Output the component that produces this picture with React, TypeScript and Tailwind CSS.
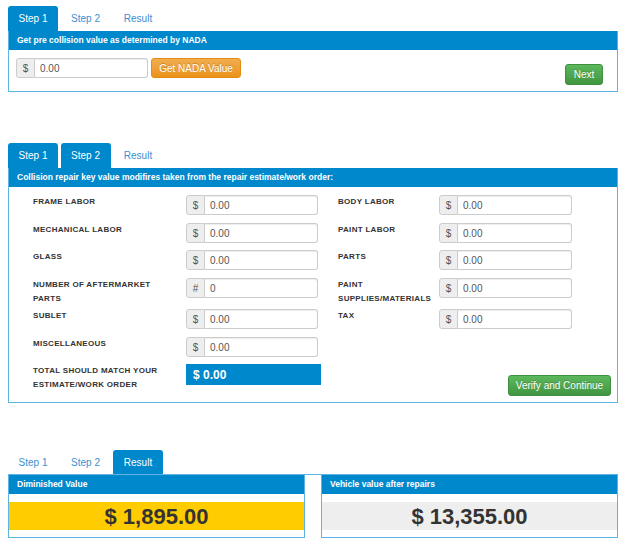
import React from "react";

type TabState = "done" | "active" | "idle";

const font = { fontFamily: '"Liberation Sans", Arial, sans-serif' };

function Tabs({ states, line = false }: { states: TabState[]; line?: boolean }) {
  const names = ["Step 1", "Step 2", "Result"];
  return (
    <div className={`flex h-[25px] gap-[2.5px] ${line ? "border-b border-[#5db4e6]" : ""}`}>
      {names.map((name, i) => (
        <div
          key={name}
          className={`flex w-[50px] items-center justify-center rounded-t-[3px] text-[10px] ${
            states[i] === "idle" ? "text-[#3b8fd1]" : "bg-[#0088cc] text-white"
          }`}
        >
          {name}
        </div>
      ))}
    </div>
  );
}

function Header({ children }: { children: React.ReactNode }) {
  return (
    <div className="flex h-[19px] items-center bg-[#0088cc] pl-[8px] text-[8.5px] font-bold text-white">
      {children}
    </div>
  );
}

function Field({ addon, value, width }: { addon: string; value: string; width: string }) {
  return (
    <div className={`flex h-[20px] ${width}`}>
      <div className="flex w-[19px] shrink-0 items-center justify-center rounded-l-[3px] border border-[#cccccc] bg-[#eeeeee] text-[10px] text-[#555]">
        {addon}
      </div>
      <div className="flex flex-1 items-center rounded-r-[3px] border border-l-0 border-[#cccccc] bg-white pl-[5px] text-[10px] text-[#555] shadow-[inset_0_1px_1px_rgba(0,0,0,0.075)]">
        {value}
      </div>
    </div>
  );
}

const rows = [
  { h: "h-[28px]", a: ["FRAME LABOR", "$", "0.00"], b: ["BODY LABOR", "$", "0.00"] },
  { h: "h-[27px]", a: ["MECHANICAL LABOR", "$", "0.00"], b: ["PAINT LABOR", "$", "0.00"] },
  { h: "h-[28px]", a: ["GLASS", "$", "0.00"], b: ["PARTS", "$", "0.00"] },
  { h: "h-[31px]", a: ["NUMBER OF AFTERMARKET PARTS", "#", "0"], b: ["PAINT SUPPLIES/MATERIALS", "$", "0.00"] },
  { h: "h-[28px]", a: ["SUBLET", "$", "0.00"], b: ["TAX", "$", "0.00"] },
  { h: "h-[27px]", a: ["MISCELLANEOUS", "$", "0.00"], b: null },
];

const label = "text-[8px] font-bold leading-[14px] tracking-[0.3px] text-[#333]";

function ResultBox({ title, value, band }: { title: string; value: string; band: string }) {
  return (
    <div className="w-[297px] border border-t-0 border-[#5db4e6]">
      <Header>{title}</Header>
      <div className="pt-[8px] pb-[7px]">
        <div className={`flex h-[28px] items-center justify-center text-[22px] font-bold text-[#333] ${band}`}>
          {value}
        </div>
      </div>
    </div>
  );
}

export default function App() {
  return (
    <div className="min-h-screen bg-white pt-[6px]" style={font}>
      <div className="ml-[8px] w-[610px]">
        {/* Step 1 */}
        <Tabs states={["active", "idle", "idle"]} />
        <div className="border border-t-0 border-[#5db4e6]">
          <Header>Get pre collision value as determined by NADA</Header>
          <div className="flex justify-between pt-[8px] pb-[6px] pl-[7px] pr-[14px]">
            <div className="flex gap-[3px]">
              <Field addon="$" value="0.00" width="w-[132px]" />
              <button className="h-[20px] w-[90px] rounded-[3px] border border-[#e38d13] bg-gradient-to-b from-[#f0ad4e] to-[#eb9316] text-[10px] text-white [text-shadow:0_-1px_0_rgba(0,0,0,0.2)]">
                Get NADA Value
              </button>
            </div>
            <button className="mt-[6px] h-[21px] w-[38px] rounded-[3px] border border-[#3e8f3e] bg-gradient-to-b from-[#5cb85c] to-[#419641] text-[10px] text-white [text-shadow:0_-1px_0_rgba(0,0,0,0.2)]">
              Next
            </button>
          </div>
        </div>

        {/* Step 2 */}
        <div className="mt-[51px]">
          <Tabs states={["done", "active", "idle"]} />
          <div className="border border-t-0 border-[#5db4e6]">
            <Header>Collision repair key value modifires taken from the repair estimate/work order:</Header>
            <div className="pt-[8px] pb-[6px] pl-[24px] pr-[6px]">
              {rows.map((r) => (
                <div key={r.a[0]} className={`flex items-start ${r.h}`}>
                  <div className={`w-[153px] pr-[14px] ${label}`}>{r.a[0]}</div>
                  <Field addon={r.a[1]} value={r.a[2]} width="w-[132px]" />
                  {r.b && (
                    <>
                      <div className={`ml-[20px] w-[101px] pr-[8px] ${label}`}>{r.b[0]}</div>
                      <Field addon={r.b[1]} value={r.b[2]} width="w-[133px]" />
                    </>
                  )}
                </div>
              ))}
              <div className="flex h-[32px] items-start">
                <div className={`w-[153px] pr-[14px] ${label}`}>TOTAL SHOULD MATCH YOUR ESTIMATE/WORK ORDER</div>
                <div className="flex h-[21px] w-[135px] items-center bg-[#0088cc] pl-[7px] text-[12px] font-bold text-white">
                  $ 0.00
                </div>
                <button className="ml-auto mt-[11px] h-[21px] w-[103px] rounded-[3px] border border-[#3e8f3e] bg-gradient-to-b from-[#5cb85c] to-[#419641] text-[10px] text-white [text-shadow:0_-1px_0_rgba(0,0,0,0.2)]">
                  Verify and Continue
                </button>
              </div>
            </div>
          </div>
        </div>

        {/* Result */}
        <div className="mt-[47px]">
          <Tabs states={["idle", "idle", "active"]} line />
          <div className="flex justify-between">
            <ResultBox title="Diminished Value" value="$ 1,895.00" band="bg-[#ffcc00]" />
            <ResultBox title="Vehicle value after repairs" value="$ 13,355.00" band="bg-[#eeeeee]" />
          </div>
        </div>
      </div>
    </div>
  );
}
